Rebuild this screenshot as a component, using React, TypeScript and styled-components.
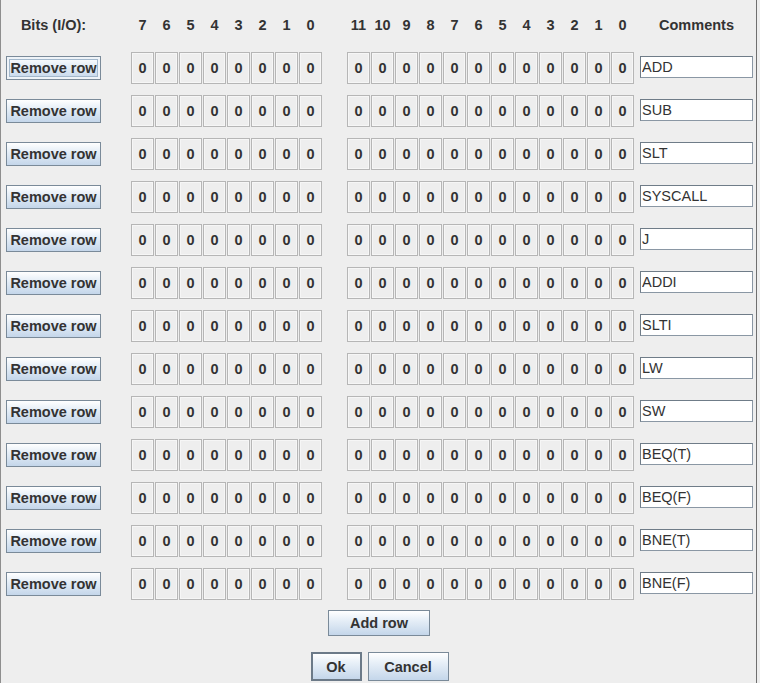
import styled, { createGlobalStyle, css } from "styled-components";

const GlobalStyle = createGlobalStyle`
    html, body {
        margin: 0;
        padding: 0;
        background: #eeeeee;
    }
    body {
        font-family: "Liberation Sans", Arial, sans-serif;
        color: #333333;
    }
`;

const Frame = styled.div`
    width: 757px;
    height: 683px;
    box-sizing: border-box;
    border-left: 1px solid #8e8e8e;
    border-right: 1px solid #6f6f6f;
    background: #eeeeee;
    display: flex;
    flex-direction: column;
    align-items: flex-start;
`;

const HeaderRow = styled.div`
    display: flex;
    align-items: center;
    height: 46px;
    padding-top: 4px;
    box-sizing: border-box;
    font-weight: bold;
    font-size: 14.5px;
`;

const Row = styled.div`
    display: flex;
    align-items: center;
    height: 43px;
`;

const LabelCol = styled.div`
    width: 95px;
    margin-left: 5px;
    margin-right: 30px;
    text-align: center;
    flex-shrink: 0;
`;

const BitGroup = styled.div<{ $gap?: number }>`
    display: flex;
    gap: 1px;
    margin-right: ${(p) => p.$gap ?? 0}px;
`;

const BitHead = styled.div`
    width: 23px;
    text-align: center;
`;

const CommentsHead = styled.div`
    width: 113px;
    margin-left: 6px;
    text-align: center;
`;

const buttonLook = css`
    font-family: "Liberation Sans", Arial, sans-serif;
    font-weight: bold;
    font-size: 14.5px;
    color: #333333;
    background: linear-gradient(to bottom, #ffffff 0%, #e8f0f8 35%, #c4d6ea 100%);
    border: 1px solid #7a8a99;
    border-radius: 0;
    padding: 0;
    cursor: pointer;
    box-sizing: border-box;
`;

const RemoveButton = styled.button<{ $focused?: boolean }>`
    ${buttonLook};
    width: 95px;
    height: 24px;
    margin-left: 5px;
    margin-right: 30px;
    margin-top: 1px;
    flex-shrink: 0;
    ${(p) =>
        p.$focused &&
        css`
            box-shadow: inset 0 0 0 2px #eef3f8, inset 0 0 0 3px #a3b8cc;
        `}
`;

const BitCell = styled.div`
    width: 23px;
    height: 32px;
    box-sizing: border-box;
    border: 1px solid #b6b6b6;
    box-shadow: inset 0 0 0 1px #f6f6f6;
    background: #eeeeee;
    display: flex;
    align-items: center;
    justify-content: center;
    font-weight: bold;
    font-size: 14.5px;
    color: #333333;
`;

const CommentInput = styled.input`
    width: 113px;
    height: 22px;
    margin-left: 6px;
    margin-top: -1px;
    box-sizing: border-box;
    border: 1px solid #8a97a4;
    border-top-color: #6f7c88;
    border-left-color: #6f7c88;
    background: #ffffff;
    padding: 0 0 0 1px;
    font-family: "Liberation Sans", Arial, sans-serif;
    font-size: 14.5px;
    color: #333333;
    outline: none;
`;

const Footer = styled.div`
    align-self: stretch;
    display: flex;
    flex-direction: column;
    align-items: center;
    padding-top: 5px;
    gap: 16px;
`;

const AddButton = styled.button`
    ${buttonLook};
    width: 102px;
    height: 26px;
    margin-left: 1px;
`;

const DialogButtons = styled.div`
    display: flex;
    gap: 6px;
    margin-left: 2px;
`;

const DialogButton = styled.button<{ $default?: boolean; $w: number }>`
    ${buttonLook};
    width: ${(p) => p.$w}px;
    height: 29px;
    ${(p) =>
        p.$default &&
        css`
            border: 2px solid #6c7a88;
        `}
`;

const comments = [
    "ADD",
    "SUB",
    "SLT",
    "SYSCALL",
    "J",
    "ADDI",
    "SLTI",
    "LW",
    "SW",
    "BEQ(T)",
    "BEQ(F)",
    "BNE(T)",
    "BNE(F)",
];

const inputBits = [7, 6, 5, 4, 3, 2, 1, 0];
const outputBits = [11, 10, 9, 8, 7, 6, 5, 4, 3, 2, 1, 0];

export default function App() {
    return (
        <>
            <GlobalStyle />
            <Frame>
                <HeaderRow>
                    <LabelCol>Bits (I/O):</LabelCol>
                    <BitGroup $gap={25}>
                        {inputBits.map((b) => (
                            <BitHead key={"i" + b}>{b}</BitHead>
                        ))}
                    </BitGroup>
                    <BitGroup>
                        {outputBits.map((b) => (
                            <BitHead key={"o" + b}>{b}</BitHead>
                        ))}
                    </BitGroup>
                    <CommentsHead>Comments</CommentsHead>
                </HeaderRow>

                {comments.map((c, i) => (
                    <Row key={c}>
                        <RemoveButton $focused={i === 0}>Remove row</RemoveButton>
                        <BitGroup $gap={25}>
                            {inputBits.map((b) => (
                                <BitCell key={"i" + b}>0</BitCell>
                            ))}
                        </BitGroup>
                        <BitGroup>
                            {outputBits.map((b) => (
                                <BitCell key={"o" + b}>0</BitCell>
                            ))}
                        </BitGroup>
                        <CommentInput defaultValue={c} />
                    </Row>
                ))}

                <Footer>
                    <AddButton>Add row</AddButton>
                    <DialogButtons>
                        <DialogButton $default $w={51}>
                            Ok
                        </DialogButton>
                        <DialogButton $w={81}>Cancel</DialogButton>
                    </DialogButtons>
                </Footer>
            </Frame>
        </>
    );
}
